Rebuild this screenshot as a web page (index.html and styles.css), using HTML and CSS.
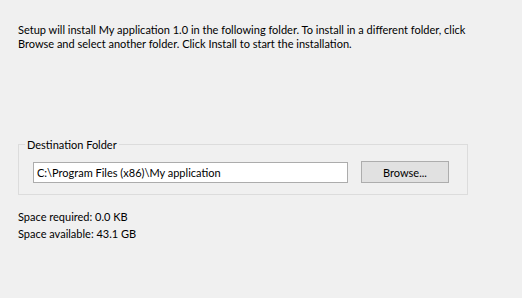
FILE: index.html
```html
<!DOCTYPE html>
<html lang="en">
<head>
    <meta charset="UTF-8">
    <title>Setup - My application</title>
    <link rel="stylesheet" href="styles.css">
</head>
<body>
    <div class="page">
        <p class="intro">
            Setup will install My application 1.0 in the following folder. To install in a different folder, click<br>
            Browse and select another folder. Click Install to start the installation.
        </p>

        <fieldset class="dest-group">
            <legend>Destination Folder</legend>
            <div class="dest-row">
                <input class="dest-input" type="text" value="C:\Program Files (x86)\My application">
                <button class="browse-btn">Browse...</button>
            </div>
        </fieldset>

        <div class="space-info">
            <div>Space required: 0.0 KB</div>
            <div>Space available: 43.1 GB</div>
        </div>
    </div>
</body>
</html>
```

FILE: styles.css
```css
body {
    margin: 0;
    padding: 0;
    background-color: #f0f0f0;
    font-family: Lato, "DejaVu Sans", sans-serif;
    font-size: 11px;
    color: #000;
}
.page {
    padding: 23px 0 0 18px;
    width: 450px;
}
.intro {
    margin: 0;
    line-height: 14px;
    white-space: nowrap;
}
.dest-group {
    margin: 87px 0 0 0;
    padding: 10px 18px 11px 14px;
    border: 1px solid #dcdcdc;
    width: 416px;
}
.dest-group legend {
    padding: 0 2px;
    margin-left: -8px;
}
.dest-row {
    display: flex;
    align-items: center;
    gap: 13px;
}
.dest-input {
    width: 307px;
    height: 19px;
    padding: 0 3px;
    border: 1px solid #acacac;
    font-family: inherit;
    font-size: 11px;
    box-sizing: content-box;
    background: #fff;
}
.browse-btn {
    width: 88px;
    height: 22px;
    background: #e1e1e1;
    border: 1px solid #adadad;
    font-family: inherit;
    font-size: 11px;
    padding: 0;
}
.space-info {
    margin-top: 13px;
    line-height: 17px;
}
```
